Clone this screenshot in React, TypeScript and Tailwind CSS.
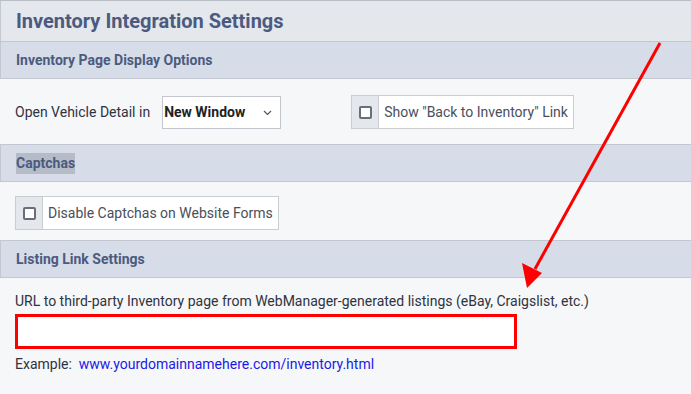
import React from "react";

function SectionHeader({ children }: { children: React.ReactNode }) {
  return (
    <div className="h-[38px] flex items-center px-[15px] bg-[#d6dde8] border-y border-l border-[#c3c8d0] text-[14px] font-bold text-[#4c5a80]">
      {children}
    </div>
  );
}

function CheckGroup({ label }: { label: string }) {
  return (
    <div className="flex h-[34px] border border-[#c9ccd1]">
      <div className="w-[27px] bg-[#e4e7ec] border-r border-[#c9ccd1] flex items-center justify-center">
        <div className="w-[13px] h-[13px] border-2 border-[#6b6e7a] rounded-[2px] bg-white" />
      </div>
      <div className="bg-white flex items-center pl-[5px] pr-[5px] text-[14px] text-[#4a4f5a]">{label}</div>
    </div>
  );
}

export default function App() {
  return (
    <div
      className="relative w-[691px] h-[394px] overflow-hidden bg-[#f6f7f9] text-[#333] border-t border-[#b9bec6]"
      style={{ fontFamily: "Roboto, 'Liberation Sans', sans-serif" }}
    >
      <div className="h-[40px] bg-[#e4e7ec] flex items-center px-[15px] text-[20px] font-bold text-[#4c5a80] border-l border-[#c3c8d0]">
        Inventory Integration Settings
      </div>
      <SectionHeader>Inventory Page Display Options</SectionHeader>
      <div className="flex items-center px-[15px] pt-[16px] pb-[15px]">
        <span className="text-[14px] text-[#2f3340]">Open Vehicle Detail in</span>
        <div className="ml-[12px] w-[119px] h-[33px] bg-white border border-[#c3c6cc] flex items-center justify-between pl-[1px] pr-[8px]">
          <span className="text-[14px] font-bold text-[#222]">New Window</span>
          <svg width="9" height="6" viewBox="0 0 9 6" className="mt-[1px]">
            <path d="M1 1 L4.5 4.5 L8 1" fill="none" stroke="#555" strokeWidth="1.2" />
          </svg>
        </div>
        <div className="ml-[70px]">
          <CheckGroup label={'Show "Back to Inventory" Link'} />
        </div>
      </div>
      <SectionHeader>
        <span className="bg-[#b5bcc7]">Captchas</span>
      </SectionHeader>
      <div className="flex px-[15px] pt-[14px] pb-[10px]">
        <CheckGroup label="Disable Captchas on Website Forms" />
      </div>
      <SectionHeader>Listing Link Settings</SectionHeader>
      <div className="px-[15px] pt-[13px]">
        <div className="text-[14px] text-[#2f3340] leading-[20px]">
          URL to third-party Inventory page from WebManager-generated listings (eBay, Craigslist, etc.)
        </div>
        <div className="mt-[3px] w-[502px] h-[35px] bg-white border-[3px] border-[#ff0000]" />
        <div className="mt-[5px] text-[14px] text-[#2f3340]">
          Example:&nbsp;&nbsp;<span className="text-[#1a1ae6]">www.yourdomainnamehere.com/inventory.html</span>
        </div>
      </div>
      <svg className="absolute left-0 top-0 pointer-events-none" width="691" height="394" viewBox="0 0 691 394">
        <line x1="660" y1="42" x2="535" y2="268" stroke="#ff0000" strokeWidth="3" />
        <polygon points="527,287 522,262 542,272" fill="#ff0000" />
      </svg>
    </div>
  );
}
